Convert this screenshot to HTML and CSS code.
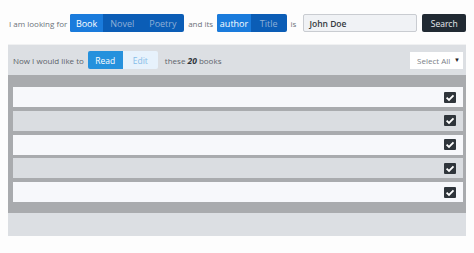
FILE: index.html
```html
<!DOCTYPE html>
<html>
<head>
<meta charset="utf-8">
<link rel="stylesheet" href="styles.css">
</head>
<body>
<div class="topbar">
  <span class="label lbl-first">I am looking for</span>
  <div class="group">
    <span class="seg active w-book">Book</span>
    <span class="seg w-novel">Novel</span>
    <span class="seg w-poetry">Poetry</span>
  </div>
  <span class="label lbl-and">and its</span>
  <div class="group">
    <span class="seg active w-author">author</span>
    <span class="seg w-title">Title</span>
  </div>
  <span class="label lbl-is">is</span>
  <div class="input">John Doe</div>
  <button class="search">Search</button>
</div>
<div class="panel">
  <div class="panel-head">
    <span class="label2">Now I would like to</span>
    <div class="mode">
      <span class="mseg mactive">Read</span>
      <span class="mseg">Edit</span>
    </div>
    <span class="label2 count">these <b><i>20</i></b> books</span>
    <div class="select">Select All <span class="tri">&#9660;</span></div>
  </div>
  <div class="list">
    <div class="row light"><svg class="chk" viewBox="0 0 12 11"><rect width="12" height="11" rx="1" fill="#2f353b"/><path d="M2.6 5.6 L5 7.9 L9.5 3.3" fill="none" stroke="#fff" stroke-width="1.8"/></svg></div>
    <div class="row dark"><svg class="chk" viewBox="0 0 12 11"><rect width="12" height="11" rx="1" fill="#2f353b"/><path d="M2.6 5.6 L5 7.9 L9.5 3.3" fill="none" stroke="#fff" stroke-width="1.8"/></svg></div>
    <div class="row light"><svg class="chk" viewBox="0 0 12 11"><rect width="12" height="11" rx="1" fill="#2f353b"/><path d="M2.6 5.6 L5 7.9 L9.5 3.3" fill="none" stroke="#fff" stroke-width="1.8"/></svg></div>
    <div class="row dark"><svg class="chk" viewBox="0 0 12 11"><rect width="12" height="11" rx="1" fill="#2f353b"/><path d="M2.6 5.6 L5 7.9 L9.5 3.3" fill="none" stroke="#fff" stroke-width="1.8"/></svg></div>
    <div class="row light"><svg class="chk" viewBox="0 0 12 11"><rect width="12" height="11" rx="1" fill="#2f353b"/><path d="M2.6 5.6 L5 7.9 L9.5 3.3" fill="none" stroke="#fff" stroke-width="1.8"/></svg></div>
  </div>
  <div class="panel-foot"></div>
</div>
</body>
</html>
```
FILE: styles.css
```css
* { box-sizing: border-box; }
body {
  margin: 0;
  background: #fdfdfd;
  font-family: "Open Sans", "Noto Sans", sans-serif;
  width: 474px;
  height: 253px;
  overflow: hidden;
}
.topbar {
  display: flex;
  align-items: center;
  height: 18px;
  margin: 14px 8px 0 9px;
}
.label {
  font-size: 8px;
  color: #6c737a;
  white-space: nowrap;
}
.lbl-first { margin-right: 3px; }
.lbl-and { margin: 0 4px 0 4px; }
.lbl-is { margin: 0 7px 0 4px; }
.group {
  display: flex;
  height: 18px;
  border-radius: 2px;
  overflow: hidden;
  background: #0b5db6;
}
.seg {
  display: flex;
  align-items: center;
  justify-content: center;
  font-size: 9px;
  color: #8fb0d6;
}
.seg.active { background: #1a7bdc; color: #fff; }
.w-book { width: 33px; }
.w-novel { width: 39px; }
.w-poetry { width: 43px; }
.w-author { width: 34px; }
.w-title { width: 36px; }
.input {
  width: 115px;
  height: 18px;
  background: #f0f2f5;
  border: 1px solid #c9ccd1;
  border-radius: 2px;
  font-size: 8.5px;
  font-weight: 600;
  color: #343a40;
  display: flex;
  align-items: center;
  padding-left: 5px;
}
.search {
  margin-left: 5px;
  width: 44px;
  height: 18px;
  border: none;
  border-radius: 2px;
  background: #212a33;
  color: #e8ebee;
  font-family: inherit;
  font-size: 8.5px;
  padding: 0;
}
.panel {
  margin: 12px 8px 0 8px;
  border-top: 1px solid #f0f1f2;
}
.panel-head {
  height: 30px;
  background: #dcdfe3;
  display: flex;
  align-items: center;
  padding: 0 3px 0 5px;
}
.label2 {
  font-size: 8px;
  color: #5d646b;
  white-space: nowrap;
}
.label2 b { color: #2f353b; font-size: 8.5px; }
.mode {
  display: flex;
  height: 18px;
  margin-left: 4px;
  border-radius: 2px;
  overflow: hidden;
}
.mseg {
  width: 35px;
  display: flex;
  align-items: center;
  justify-content: center;
  font-size: 8.5px;
  background: #e7f2fc;
  color: #86bce8;
}
.mseg.mactive { background: #2591dd; color: #fff; }
.count { margin-left: 7px; }
.select {
  margin-left: auto;
  width: 53px;
  height: 17px;
  background: #fff;
  font-size: 8px;
  color: #7a8087;
  display: flex;
  align-items: center;
  padding-left: 7px;
}
.tri {
  margin-left: auto;
  margin-right: 3px;
  font-size: 6px;
  color: #222;
}
.list {
  background: #a9abae;
  padding: 12px 3px 11px 5px;
  display: flex;
  flex-direction: column;
  gap: 3.75px;
}
.row {
  height: 20px;
  display: flex;
  align-items: center;
  justify-content: flex-end;
  padding-right: 7px;
}
.row.light { background: #f7f8fb; }
.row.dark { background: #dadde1; }
.chk { width: 12px; height: 11px; display: block; }
.panel-foot {
  height: 23px;
  background: #dcdfe3;
}
```
